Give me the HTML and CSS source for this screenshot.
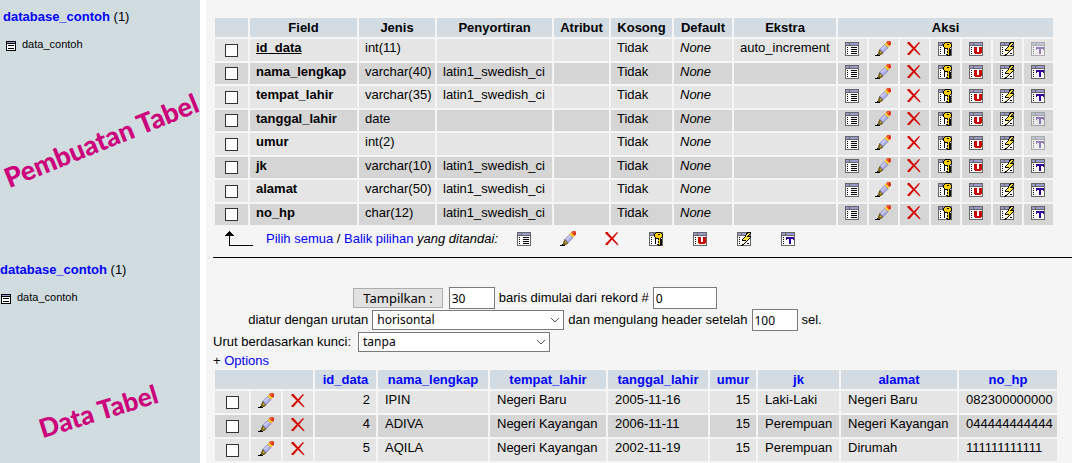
FILE: index.html
```
<!DOCTYPE html>
<html lang="id">
<head>
<meta charset="utf-8">
<title>database_contoh</title>
<link rel="stylesheet" href="styles.css">
</head>
<body>
<svg class="sprite" aria-hidden="true">
  <symbol id="base" viewBox="0 0 14 14">
    <path fill="#666" d="M0 0h14v14H0z"/>
    <path fill="#99c" d="M1 1h3v2H1zM5 1h8v2H5z"/>
    <path fill="#fff" d="M1 4h3v9H1zM5 4h8v9H5z"/>
    <path fill="#fff" d="M4 4h1v9H4z"/>
    <path fill="#000" d="M2 5h1v1H2zM2 7h1v1H2zM2 9h1v1H2zM2 11h1v1H2z"/>
  </symbol>
  <symbol id="browse" viewBox="0 0 14 14">
    <use href="#base"/>
    <path d="M6 5h6v1H6zM6 7h6v1H6zM6 9h6v1H6zM6 11h6v1H6z"/>
  </symbol>
  <symbol id="edit" viewBox="0 0 16 16">
    <path fill="#000" d="M0 14h5v1H0zM2 13h3v1H2z"/>
    <path fill="#6b5a18" d="M4.500 8L8.500 12L6 14H3V12z"/>
    <path fill="#c9a83c" d="M5.500 10L7 11.500L5.500 12.800L4.500 11.800z"/>
    <path fill="#62629c" d="M4.500 8.500L10 3L13.500 6.500L8 12z"/>
    <path fill="#b4b4ee" d="M5.200 8.500L10 3.700L12.800 6.500L8 11.300z"/>
    <path fill="#d8d8ff" d="M6 8L10 4L10.800 4.800L6.800 8.800z"/>
    <path fill="#fc2" d="M9.500 3L11 1.500L14.500 5L13 6.500z"/>
    <path fill="#e03a18" d="M11 1.500L12.500 0H15L16 1V3.500L14.500 5z"/>
    <path fill="#ff8560" d="M12 1.500L13 .8H14.200L13 2.300z"/>
  </symbol>
  <symbol id="drop" viewBox="0 0 14 14">
    <path fill="#d40000" d="M0 1L1 0H2.500L7 5.200L11.500 0.500L13 0L12.500 1.300L8.200 6.500L13 12L13.500 13.500L12 12.800L6.900 7.800L2.500 13H.5V11.800L5.600 6.500L1.500 2.500z"/>
  </symbol>
  <symbol id="primary" viewBox="0 0 14 14">
    <use href="#base"/>
    <path d="M6 6h1v6H6z"/>
    <path fill="#000" d="M7 0h5v1h1v1h1v3h-1v1h-1v1h1v6h-1v1H9v-1H8v-1h1V7H7V6H6V5H5V2h1V1h1z"/>
    <path fill="#fc0" d="M7 1h5v1h1v3h-1v1h-1v7h-1V6H7V5H6V2h1zM9 8h1v1H9zM9 11h1v1H9z"/>
    <path d="M9 2h2v1H9z"/>
  </symbol>
  <symbol id="unique" viewBox="0 0 14 14">
    <use href="#base"/>
    <path fill="#c00" d="M5 5h3v5h2V5h3v6h-1v1H6v-1H5z"/>
  </symbol>
  <symbol id="index" viewBox="0 0 14 14">
    <use href="#base"/>
    <path d="M6 6h1v1H6zM6 11h1v1H6zM10 11h2v1h-2z"/>
    <path d="M10 0h4v2h-1v1h-1v1h2v2h-1v1h-1v1h-1v1h-1v1H9v1H8v1H7v1H6v1H4v-1h1v-1h1v-1h1v-1h1V9H5V7h1V6h1V5h1V3h1V1h1z"/>
    <path fill="#ffe040" d="M11 1h2v1h-1v1h-1v1h-1v1h3v1h-1v1h-1v1h-1v1H9v1H8v1H7v1H6v-1h1v-1h1V9h1V8H6V7h1V6h1V5h1V3h1V2h1z"/>
  </symbol>
  <symbol id="fulltext" viewBox="0 0 14 14">
    <use href="#base"/>
    <path fill="#309" d="M5 5h8v3h-1V7h-2v5H8V7H6v1H5z"/>
  </symbol>
  <symbol id="tbl" viewBox="0 0 10 10">
    <path d="M0 0h10v10H0z"/>
    <path fill="#99c" d="M1 1h8v1H1z"/>
    <path fill="#fff" d="M1 3h8v6H1z"/>
    <path d="M2 4h6v1H2zM2 7h6v1H2z"/>
  </symbol>
</svg>

<div class="page">
  <aside class="sidebar">
    <section class="nav">
      <h2 class="db"><a href="#">database_contoh</a> <span>(1)</span></h2>
      <p class="tbl"><svg class="tbl-icon"><use href="#tbl"/></svg><span>data_contoh</span></p>
      <p class="caption caption-create">Pembuatan Tabel</p>
    </section>
    <section class="nav nav-second">
      <h2 class="db"><a href="#">database_contoh</a> <span>(1)</span></h2>
      <p class="tbl"><svg class="tbl-icon"><use href="#tbl"/></svg><span>data_contoh</span></p>
      <p class="caption caption-data">Data Tabel</p>
    </section>
  </aside>

  <main class="main">
    <table class="grid structure">
      <colgroup><col class="c-check"><col class="c-field"><col class="c-type"><col class="c-coll"><col class="c-attr"><col class="c-null"><col class="c-def"><col class="c-extra"><col class="c-act" span="7"></colgroup>
      <thead>
        <tr><th></th><th>Field</th><th>Jenis</th><th>Penyortiran</th><th>Atribut</th><th>Kosong</th><th>Default</th><th>Ekstra</th><th colspan="7">Aksi</th></tr>
      </thead>
      <tbody>
        <tr><td class="mid"><input type="checkbox" aria-label="id_data"></td><th><u>id_data</u></th><td>int(11)</td><td></td><td></td><td>Tidak</td><td><i>None</i></td><td>auto_increment</td><td class="mid"><svg class="icon"><use href="#browse"/></svg></td><td class="mid"><svg class="icon pen"><use href="#edit"/></svg></td><td class="mid"><svg class="icon cross"><use href="#drop"/></svg></td><td class="mid"><svg class="icon"><use href="#primary"/></svg></td><td class="mid"><svg class="icon"><use href="#unique"/></svg></td><td class="mid"><svg class="icon"><use href="#index"/></svg></td><td class="mid"><svg class="icon off"><use href="#fulltext"/></svg></td></tr>
        <tr><td class="mid"><input type="checkbox" aria-label="nama_lengkap"></td><th>nama_lengkap</th><td>varchar(40)</td><td>latin1_swedish_ci</td><td></td><td>Tidak</td><td><i>None</i></td><td></td><td class="mid"><svg class="icon"><use href="#browse"/></svg></td><td class="mid"><svg class="icon pen"><use href="#edit"/></svg></td><td class="mid"><svg class="icon cross"><use href="#drop"/></svg></td><td class="mid"><svg class="icon"><use href="#primary"/></svg></td><td class="mid"><svg class="icon"><use href="#unique"/></svg></td><td class="mid"><svg class="icon"><use href="#index"/></svg></td><td class="mid"><svg class="icon"><use href="#fulltext"/></svg></td></tr>
        <tr><td class="mid"><input type="checkbox" aria-label="tempat_lahir"></td><th>tempat_lahir</th><td>varchar(35)</td><td>latin1_swedish_ci</td><td></td><td>Tidak</td><td><i>None</i></td><td></td><td class="mid"><svg class="icon"><use href="#browse"/></svg></td><td class="mid"><svg class="icon pen"><use href="#edit"/></svg></td><td class="mid"><svg class="icon cross"><use href="#drop"/></svg></td><td class="mid"><svg class="icon"><use href="#primary"/></svg></td><td class="mid"><svg class="icon"><use href="#unique"/></svg></td><td class="mid"><svg class="icon"><use href="#index"/></svg></td><td class="mid"><svg class="icon"><use href="#fulltext"/></svg></td></tr>
        <tr><td class="mid"><input type="checkbox" aria-label="tanggal_lahir"></td><th>tanggal_lahir</th><td>date</td><td></td><td></td><td>Tidak</td><td><i>None</i></td><td></td><td class="mid"><svg class="icon"><use href="#browse"/></svg></td><td class="mid"><svg class="icon pen"><use href="#edit"/></svg></td><td class="mid"><svg class="icon cross"><use href="#drop"/></svg></td><td class="mid"><svg class="icon"><use href="#primary"/></svg></td><td class="mid"><svg class="icon"><use href="#unique"/></svg></td><td class="mid"><svg class="icon"><use href="#index"/></svg></td><td class="mid"><svg class="icon off"><use href="#fulltext"/></svg></td></tr>
        <tr><td class="mid"><input type="checkbox" aria-label="umur"></td><th>umur</th><td>int(2)</td><td></td><td></td><td>Tidak</td><td><i>None</i></td><td></td><td class="mid"><svg class="icon"><use href="#browse"/></svg></td><td class="mid"><svg class="icon pen"><use href="#edit"/></svg></td><td class="mid"><svg class="icon cross"><use href="#drop"/></svg></td><td class="mid"><svg class="icon"><use href="#primary"/></svg></td><td class="mid"><svg class="icon"><use href="#unique"/></svg></td><td class="mid"><svg class="icon"><use href="#index"/></svg></td><td class="mid"><svg class="icon off"><use href="#fulltext"/></svg></td></tr>
        <tr><td class="mid"><input type="checkbox" aria-label="jk"></td><th>jk</th><td>varchar(10)</td><td>latin1_swedish_ci</td><td></td><td>Tidak</td><td><i>None</i></td><td></td><td class="mid"><svg class="icon"><use href="#browse"/></svg></td><td class="mid"><svg class="icon pen"><use href="#edit"/></svg></td><td class="mid"><svg class="icon cross"><use href="#drop"/></svg></td><td class="mid"><svg class="icon"><use href="#primary"/></svg></td><td class="mid"><svg class="icon"><use href="#unique"/></svg></td><td class="mid"><svg class="icon"><use href="#index"/></svg></td><td class="mid"><svg class="icon"><use href="#fulltext"/></svg></td></tr>
        <tr><td class="mid"><input type="checkbox" aria-label="alamat"></td><th>alamat</th><td>varchar(50)</td><td>latin1_swedish_ci</td><td></td><td>Tidak</td><td><i>None</i></td><td></td><td class="mid"><svg class="icon"><use href="#browse"/></svg></td><td class="mid"><svg class="icon pen"><use href="#edit"/></svg></td><td class="mid"><svg class="icon cross"><use href="#drop"/></svg></td><td class="mid"><svg class="icon"><use href="#primary"/></svg></td><td class="mid"><svg class="icon"><use href="#unique"/></svg></td><td class="mid"><svg class="icon"><use href="#index"/></svg></td><td class="mid"><svg class="icon"><use href="#fulltext"/></svg></td></tr>
        <tr><td class="mid"><input type="checkbox" aria-label="no_hp"></td><th>no_hp</th><td>char(12)</td><td>latin1_swedish_ci</td><td></td><td>Tidak</td><td><i>None</i></td><td></td><td class="mid"><svg class="icon"><use href="#browse"/></svg></td><td class="mid"><svg class="icon pen"><use href="#edit"/></svg></td><td class="mid"><svg class="icon cross"><use href="#drop"/></svg></td><td class="mid"><svg class="icon"><use href="#primary"/></svg></td><td class="mid"><svg class="icon"><use href="#unique"/></svg></td><td class="mid"><svg class="icon"><use href="#index"/></svg></td><td class="mid"><svg class="icon"><use href="#fulltext"/></svg></td></tr>
      </tbody>
    </table>

    <div class="bulk">
      <svg class="arrow" viewBox="0 0 28 16"><path d="M4 1h1v13h23v1H4zM4 0h1v1h1v1h1v1h1v1h1v1H0V4h1V3h1V2h1V1h1z"/></svg>
      <span class="bulk-text"><a href="#">Pilih semua</a> / <a href="#">Balik pilihan</a> <i>yang ditandai:</i></span>
      <span class="bulk-icons">
        <button type="button" aria-label="Browse"><svg class="icon"><use href="#browse"/></svg></button>
        <button type="button" aria-label="Ubah"><svg class="icon pen"><use href="#edit"/></svg></button>
        <button type="button" aria-label="Hapus"><svg class="icon cross"><use href="#drop"/></svg></button>
        <button type="button" aria-label="Primary"><svg class="icon"><use href="#primary"/></svg></button>
        <button type="button" aria-label="Unique"><svg class="icon"><use href="#unique"/></svg></button>
        <button type="button" aria-label="Index"><svg class="icon"><use href="#index"/></svg></button>
        <button type="button" aria-label="Fulltext"><svg class="icon"><use href="#fulltext"/></svg></button>
      </span>
    </div>
    <hr class="rule">

    <form class="display">
      <div class="line">
        <button type="button" class="show">Tampilkan :</button>
        <input class="short" id="rows" type="text" value="30">
        <label for="rows">baris dimulai dari</label>
        <label for="start">rekord #</label>
        <input class="long" id="start" type="text" value="0">
      </div>
      <div class="line">
        <label for="mode">diatur dengan urutan</label>
        <span class="select"><select id="mode"><option>horisontal</option></select><svg viewBox="0 0 10 6"><path d="M1 1l4 4 4-4"/></svg></span>
        <label for="repeat">dan mengulang header setelah</label>
        <input class="short" id="repeat" type="text" value="100">
        <span>sel.</span>
      </div>
      <div class="line line-sort">
        <label for="key">Urut berdasarkan kunci:</label>
        <span class="select"><select id="key"><option>tanpa</option></select><svg viewBox="0 0 10 6"><path d="M1 1l4 4 4-4"/></svg></span>
      </div>
      <p class="options">+ <a href="#">Options</a></p>
    </form>

    <table class="grid data">
      <colgroup><col class="d-check"><col class="d-act" span="2"><col class="d-id"><col class="d-name"><col class="d-place"><col class="d-date"><col class="d-age"><col class="d-sex"><col class="d-place"><col class="d-phone"></colgroup>
      <thead>
        <tr><th colspan="3"></th><th><a href="#">id_data</a></th><th><a href="#">nama_lengkap</a></th><th><a href="#">tempat_lahir</a></th><th><a href="#">tanggal_lahir</a></th><th><a href="#">umur</a></th><th><a href="#">jk</a></th><th><a href="#">alamat</a></th><th><a href="#">no_hp</a></th></tr>
      </thead>
      <tbody>
        <tr><td class="mid"><input type="checkbox" aria-label="IPIN"></td><td class="mid"><svg class="icon pen"><use href="#edit"/></svg></td><td class="mid"><svg class="icon cross"><use href="#drop"/></svg></td><td class="num">2</td><td>IPIN</td><td>Negeri Baru</td><td>2005-11-16</td><td class="num">15</td><td>Laki-Laki</td><td>Negeri Baru</td><td>082300000000</td></tr>
        <tr><td class="mid"><input type="checkbox" aria-label="ADIVA"></td><td class="mid"><svg class="icon pen"><use href="#edit"/></svg></td><td class="mid"><svg class="icon cross"><use href="#drop"/></svg></td><td class="num">4</td><td>ADIVA</td><td>Negeri Kayangan</td><td>2006-11-11</td><td class="num">15</td><td>Perempuan</td><td>Negeri Kayangan</td><td>044444444444</td></tr>
        <tr><td class="mid"><input type="checkbox" aria-label="AQILA"></td><td class="mid"><svg class="icon pen"><use href="#edit"/></svg></td><td class="mid"><svg class="icon cross"><use href="#drop"/></svg></td><td class="num">5</td><td>AQILA</td><td>Negeri Kayangan</td><td>2002-11-19</td><td class="num">15</td><td>Perempuan</td><td>Dirumah</td><td>111111111111</td></tr>
      </tbody>
    </table>
  </main>
</div>
</body>
</html>
```
FILE: styles.css
```
* { box-sizing: border-box; }
body { margin: 0; background: #fff; color: #000; font: 13px/15px "Liberation Sans", Arial, sans-serif; }
a { color: #00f; text-decoration: none; }
p, h2 { margin: 0; }
.sprite { position: absolute; width: 0; height: 0; }
.page { display: flex; gap: 6px; min-height: 100vh; }

.sidebar { flex: 0 0 200px; min-width: 0; background: #d0dce0; }
.nav { padding: 9px 0 0 3px; height: 253px; }
.nav-second { height: auto; padding-left: 0; }
.db { font-size: 13px; line-height: 15px; }
.db span { font-weight: normal; }
.tbl { display: flex; align-items: center; gap: 6px; margin-top: 14px; padding-left: 3px; font-size: 11px; line-height: 13px; }
.nav-second .tbl { padding-left: 1px; }
.tbl-icon { width: 10px; height: 10px; margin-top: 3px; }
.caption { width: max-content; color: #cc007a; font: 900 26px/30px Lato, sans-serif; transform-origin: left bottom; }
.caption-create { margin: 112px 0 0 8px; font-size: 27px; transform: rotate(-22deg); }
.caption-data { margin: 109px 0 0 44px; transform: rotate(-17deg); }

.main { flex: 1; min-width: 0; padding: 16px 0 0 7px; background: #f5f5f5; }
.grid { border-collapse: separate; border-spacing: 2px; table-layout: fixed; width: 0; }
.grid th, .grid td { padding: 1px 3px 1px 6px; text-align: left; vertical-align: top; white-space: nowrap; }
.grid thead th { height: 19px; padding: 2px 0; background: #d3dce3; text-align: center; }
.grid tbody tr { height: 22px; background: #e5e5e5; }
.grid tbody tr:nth-child(even) { background: #d5d5d5; }
.structure tbody tr:nth-child(even) { height: 21px; }
.grid .mid { padding: 0; line-height: 0; text-align: center; vertical-align: middle; }
.grid td.mid:has(svg) { padding: 0 1px 3px 0; }
.grid.data td:not(.mid) { padding-left: 7px; }
.grid .num { padding-right: 6px; text-align: right; }
.c-check { width: 33px; }
.c-field { width: 107px; }
.c-type { width: 76px; }
.c-coll { width: 115px; }
.c-attr { width: 55px; }
.c-null { width: 61px; }
.c-def { width: 58px; }
.c-extra { width: 102px; }
.c-act { width: 29px; }
.d-check { width: 34px; }
.d-act { width: 30px; }
.d-id { width: 61px; }
.d-name { width: 110px; }
.d-place { width: 116px; }
.d-date { width: 100px; }
.d-age { width: 46px; }
.d-sex { width: 81px; }
.d-phone { width: 98px; }

.icon { width: 14px; height: 14px; shape-rendering: crispEdges; }
.pen, .cross { shape-rendering: auto; }
.pen { width: 16px; height: 16px; }
.off { opacity: .45; }
input[type="checkbox"] { appearance: none; width: 13px; height: 13px; margin: 0; border: 1px solid #333; background: #fff; }
input[type="checkbox"]:checked { background: #333; }

.bulk { display: flex; align-items: center; height: 24px; padding-left: 12px; }
.arrow { width: 28px; height: 16px; margin-right: 13px; shape-rendering: crispEdges; }
.bulk-text { padding-bottom: 2px; }
.bulk-icons { display: flex; gap: 28px; margin-left: 18px; }
.bulk-icons button { display: grid; place-items: center; width: 16px; height: 16px; padding: 0; border: 0; background: none; }
.rule { height: 1px; margin: 6px 0 29px; border: 0; background: #000; }

.display { max-width: 644px; }
.line { display: flex; align-items: center; justify-content: center; gap: 4px; height: 22px; }
.line-sort { justify-content: flex-start; gap: 7px; }
.line label, .line > span:last-child:not(.select) { padding-bottom: 2px; }
.show { height: 20px; margin-right: 2px; padding: 0 9px; border: 1px solid #adadad; background: #e1e1e1; color: #000; font: 13px/18px "Noto Sans", sans-serif; }
.line input, .select select { border: 1px solid #7a7a7a; border-radius: 0; background: #fff; color: #000; font: 12px/18px "Noto Sans", sans-serif; }
.line input { height: 22px; padding: 1px 2px; }
.short { width: 46px; }
.long { width: 64px; }
.select { display: grid; align-items: center; }
.select select { grid-area: 1 / 1; appearance: none; width: 192px; height: 20px; padding: 0 4px; }
.select svg { grid-area: 1 / 1; justify-self: end; width: 10px; height: 6px; margin-right: 4px; fill: none; stroke: #555; pointer-events: none; }
```
